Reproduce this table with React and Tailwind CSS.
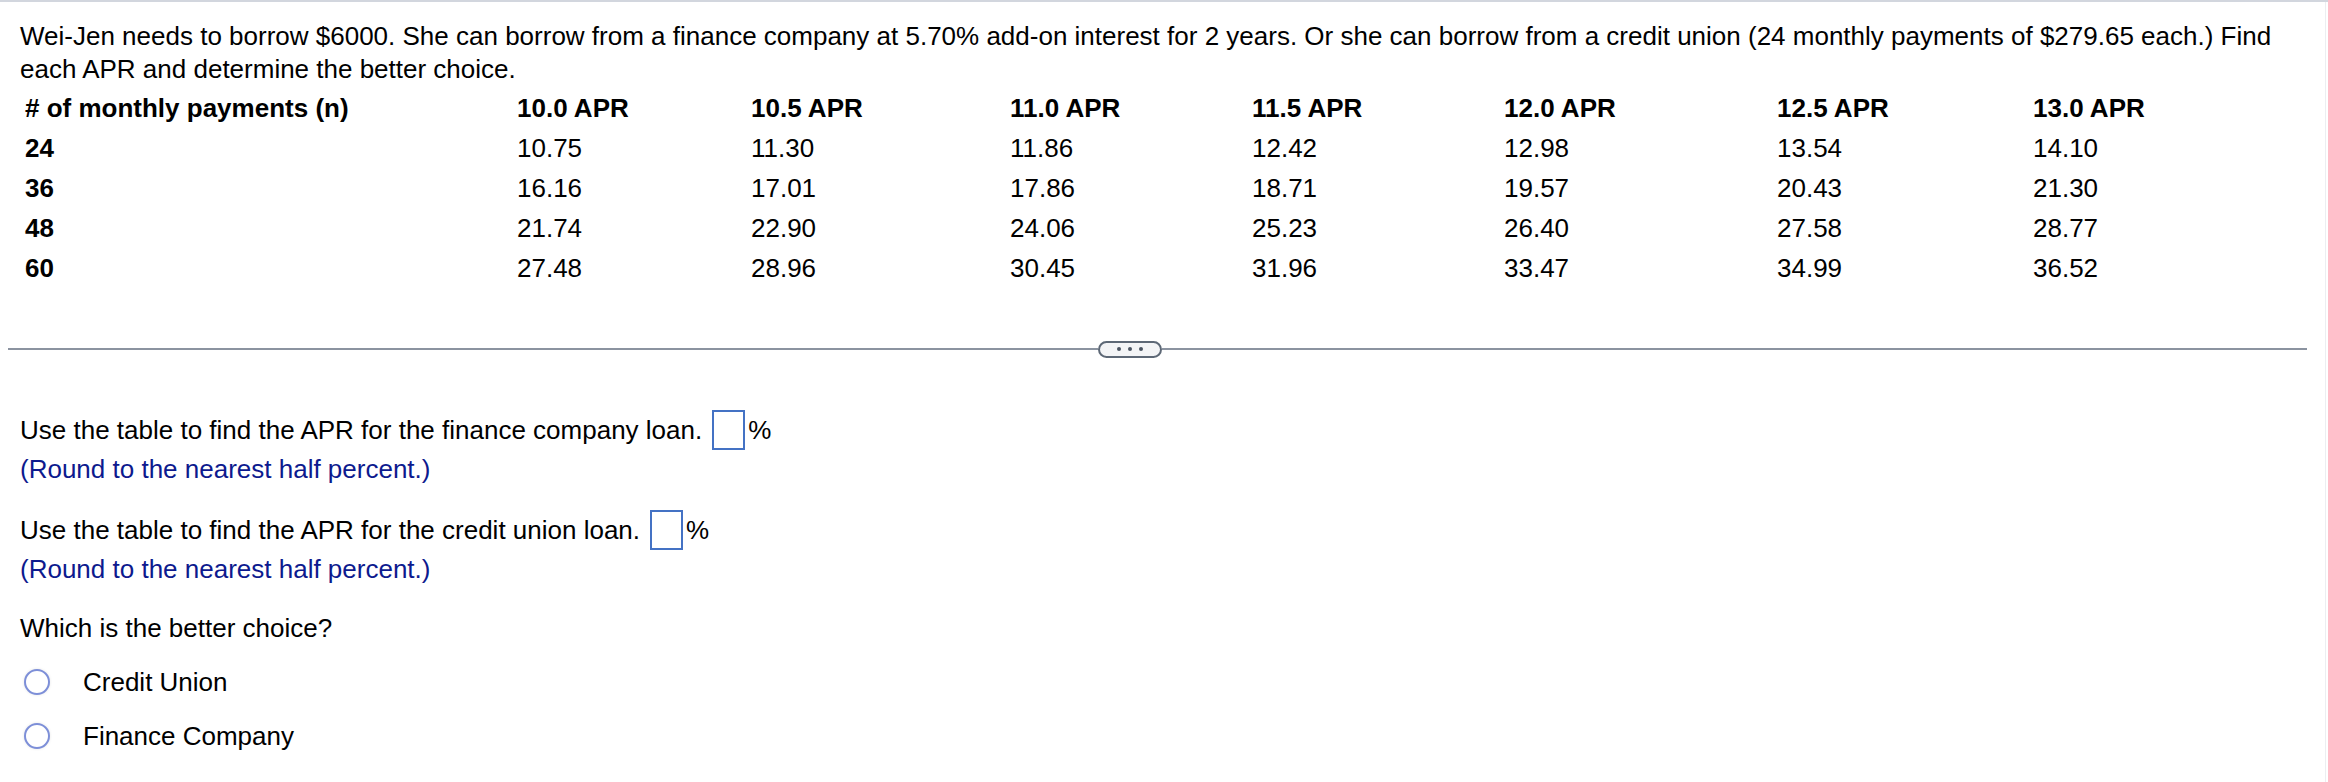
import React from "react";

const headers = ["10.0 APR", "10.5 APR", "11.0 APR", "11.5 APR", "12.0 APR", "12.5 APR", "13.0 APR"];
const rows = [
  ["24", "10.75", "11.30", "11.86", "12.42", "12.98", "13.54", "14.10"],
  ["36", "16.16", "17.01", "17.86", "18.71", "19.57", "20.43", "21.30"],
  ["48", "21.74", "22.90", "24.06", "25.23", "26.40", "27.58", "28.77"],
  ["60", "27.48", "28.96", "30.45", "31.96", "33.47", "34.99", "36.52"],
];

const gridCols = "grid grid-cols-[492px_234px_259px_242px_252px_273px_256px_1fr]";

function AnswerBox() {
  return <span className="ml-[10px] inline-block h-[40px] w-[33px] border-2 border-[#4472c4] bg-white" />;
}

function Radio({ label, className }) {
  return (
    <div className={`flex h-[40px] items-center pl-[24px] ${className}`}>
      <span className="inline-block h-[26px] w-[26px] rounded-full border-[2.5px] border-[#7d8fd8] bg-white shadow-[0_0_3px_rgba(0,0,0,0.10)]" />
      <span className="ml-[33px]">{label}</span>
    </div>
  );
}

export default function App() {
  return (
    <div className="relative h-[782px] w-[2328px] overflow-hidden border-t-[2px] border-[#d2d6de] bg-white font-['Liberation_Sans',Arial,sans-serif] text-[26px] text-black">
      <div className="absolute right-[2px] top-0 h-full w-px bg-[#eceef1]" />
      <p className="w-[2290px] pl-[20px] pt-[18px] leading-[33px]">
        Wei-Jen needs to borrow $6000. She can borrow from a finance company at 5.70% add-on interest for 2 years. Or
        she can borrow from a credit union (24 monthly payments of $279.65 each.) Find each APR and determine the better
        choice.
      </p>

      <div className="mt-[2px] w-[2300px] pl-[25px]">
        <div className={`${gridCols} h-[40px] items-center font-bold`}>
          <div># of monthly payments (n)</div>
          {headers.map((h) => (
            <div key={h}>{h}</div>
          ))}
        </div>
        {rows.map((r) => (
          <div key={r[0]} className={`${gridCols} h-[40px] items-center`}>
            {r.map((c, i) => (
              <div key={i} className={i === 0 ? "font-bold" : ""}>
                {c}
              </div>
            ))}
          </div>
        ))}
      </div>

      <div className="ml-[8px] mt-[52px] flex h-[18px] w-[2299px] items-center">
        <div className="h-[2px] w-[1090px] bg-[#8b93a0]" />
        <div className="flex h-[17px] w-[64px] items-center justify-center gap-[7px] rounded-full border-2 border-[#5d6876] bg-[#f3f4f6]">
          <span className="h-[4px] w-[4px] rounded-full bg-[#4b5462]" />
          <span className="h-[4px] w-[4px] rounded-full bg-[#4b5462]" />
          <span className="h-[4px] w-[4px] rounded-full bg-[#4b5462]" />
        </div>
        <div className="h-[2px] flex-1 bg-[#8b93a0]" />
      </div>

      <div className="pl-[20px]">
        <div className="mt-[52px] flex h-[40px] items-center">
          <span>Use the table to find the APR for the finance company loan.</span>
          <AnswerBox />
          <span className="ml-[3px]">%</span>
        </div>
        <div className="mt-[4px] leading-[30px] text-[#0d1a8e]">(Round to the nearest half percent.)</div>

        <div className="mt-[26px] flex h-[40px] items-center">
          <span>Use the table to find the APR for the credit union loan.</span>
          <AnswerBox />
          <span className="ml-[3px]">%</span>
        </div>
        <div className="mt-[4px] leading-[30px] text-[#0d1a8e]">(Round to the nearest half percent.)</div>

        <div className="mt-[29px] leading-[30px]">Which is the better choice?</div>
      </div>

      <Radio label="Credit Union" className="mt-[19px]" />
      <Radio label="Finance Company" className="mt-[14px]" />
    </div>
  );
}
